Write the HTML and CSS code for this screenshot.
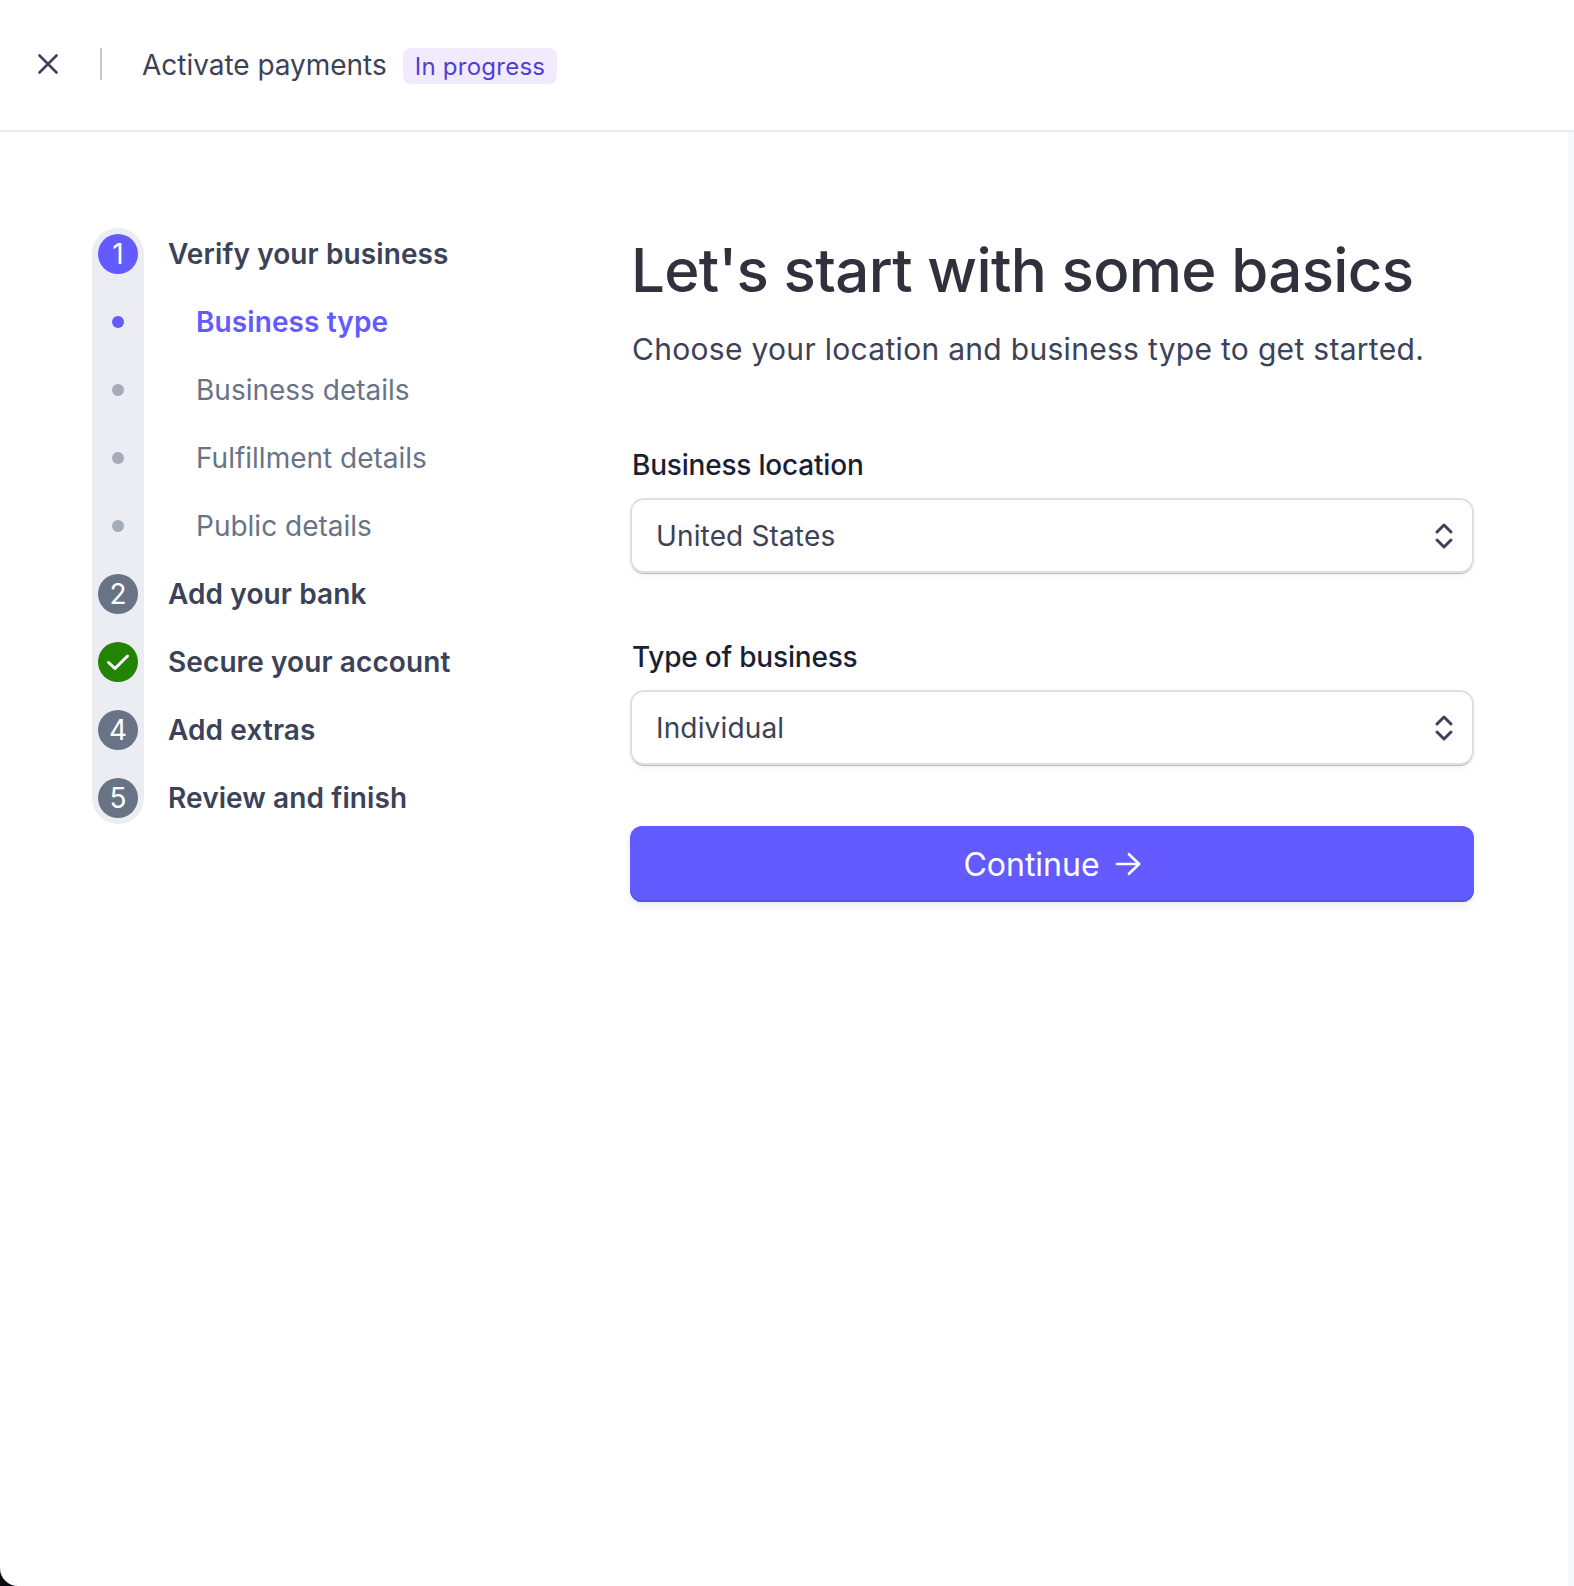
FILE: index.html
```html
<!DOCTYPE html>
<html lang="en">
<head>
<meta charset="UTF-8" />
<title>Activate payments</title>
<link rel="stylesheet" href="styles.css">
</head>
<body>
<div class="page">
  <header class="topbar">
    <button class="close-btn" aria-label="Close">
      <svg width="24" height="24" viewBox="0 0 24 24" fill="none" stroke="#3c4257" stroke-width="2.6" stroke-linecap="round"><path d="M3.5 3.5l17 17M20.5 3.5l-17 17"/></svg>
    </button>
    <span class="topbar-divider"></span>
    <span class="topbar-title">Activate payments</span>
    <span class="badge">In progress</span>
  </header>

  <div class="content">
    <nav class="steps">
      <ol class="step-list">
        <li class="step"><span class="marker current">1</span><span class="step-label">Verify your business</span></li>
        <li class="step sub active"><span class="dot-slot"><span class="dot"></span></span><span class="step-label">Business type</span></li>
        <li class="step sub"><span class="dot-slot"><span class="dot"></span></span><span class="step-label">Business details</span></li>
        <li class="step sub"><span class="dot-slot"><span class="dot"></span></span><span class="step-label">Fulfillment details</span></li>
        <li class="step sub"><span class="dot-slot"><span class="dot"></span></span><span class="step-label">Public details</span></li>
        <li class="step"><span class="marker">2</span><span class="step-label">Add your bank</span></li>
        <li class="step">
          <span class="marker done">
            <svg width="28" height="28" viewBox="0 0 28 28" fill="none" stroke="#fff" stroke-width="3" stroke-linecap="round" stroke-linejoin="round"><path d="M4.5 14.5l6.5 6L23.5 8"/></svg>
          </span>
          <span class="step-label">Secure your account</span>
        </li>
        <li class="step"><span class="marker">4</span><span class="step-label">Add extras</span></li>
        <li class="step"><span class="marker">5</span><span class="step-label">Review and finish</span></li>
      </ol>
    </nav>

    <main class="form-col">
      <h1>Let's start with some basics</h1>
      <p class="lead">Choose your location and business type to get started.</p>

      <div class="field">
        <label class="field-label">Business location</label>
        <div class="select">
          <span>United States</span>
          <svg width="20" height="28" viewBox="0 0 20 28" fill="none" stroke="#3c4257" stroke-width="3" stroke-linecap="round" stroke-linejoin="round"><path d="M3 10l7-7 7 7M3 18l7 7 7-7"/></svg>
        </div>
      </div>

      <div class="field">
        <label class="field-label">Type of business</label>
        <div class="select">
          <span>Individual</span>
          <svg width="20" height="28" viewBox="0 0 20 28" fill="none" stroke="#3c4257" stroke-width="3" stroke-linecap="round" stroke-linejoin="round"><path d="M3 10l7-7 7 7M3 18l7 7 7-7"/></svg>
        </div>
      </div>

      <button class="continue-btn">
        Continue
        <svg width="26" height="26" viewBox="0 0 28 28" fill="none" stroke="#fff" stroke-width="2.8" stroke-linecap="round" stroke-linejoin="round"><path d="M2 14h24M15 3.5l11 10.5-11 10.5"/></svg>
      </button>
    </main>
  </div>
</div>
</body>
</html>
```

FILE: styles.css
```css
/* Reset and base */
*, *::before, *::after {
  box-sizing: border-box;
}
html {
  background: #0b0b14;
}
body {
  margin: 0;
  font-family: Inter, "Liberation Sans", sans-serif;
  color: #3c4257;
}
.page {
  height: 1586px;
  background: #fff;
  border-bottom-left-radius: 18px;
  overflow: hidden;
  display: flex;
  flex-direction: column;
}
/* Top bar */
.topbar {
  height: 132px;
  flex-shrink: 0;
  display: flex;
  align-items: center;
  padding-left: 36px;
  border-bottom: 2px solid #ecedf2;
}
.close-btn {
  width: 24px;
  height: 24px;
  margin-bottom: 2px;
  padding: 0;
  border: none;
  background: none;
  display: flex;
}
.topbar-divider {
  width: 2px;
  height: 32px;
  margin-bottom: 2px;
  margin-left: 40px;
  background: #c1c9d2;
}
.topbar-title {
  margin-left: 40px;
  font-size: 28px;
  letter-spacing: -0.03px;
}
.badge {
  margin-left: 16px;
  margin-top: 2px;
  height: 36px;
  padding: 0 12px;
  display: flex;
  align-items: center;
  background: #f2ebff;
  border-radius: 8px;
  color: #4f3fd6;
  font-size: 24px;
  letter-spacing: 0.25px;
}
/* Content area */
.content {
  flex: 1;
  display: flex;
  border-right: 6px solid #f7f8fa;
}
/* Steps */
.steps {
  width: 632px;
  flex-shrink: 0;
  padding: 102px 0 0 98px;
}
.step-list {
  position: relative;
  margin: 0;
  padding: 0;
  list-style: none;
  display: flex;
  flex-direction: column;
  gap: 28px;
}
.step-list::before {
  content: "";
  position: absolute;
  top: -6px;
  bottom: -6px;
  left: -6px;
  width: 52px;
  background: #ecedf2;
  border-radius: 26px;
}
.step {
  position: relative;
  height: 40px;
  display: flex;
  align-items: center;
  gap: 30px;
  font-size: 28px;
  font-weight: 600;
  letter-spacing: 0.1px;
}
.marker {
  width: 40px;
  height: 40px;
  flex-shrink: 0;
  border-radius: 50%;
  background: #697386;
  color: #fff;
  display: flex;
  align-items: center;
  justify-content: center;
  font-weight: 400;
}
.marker.current {
  background: #635bff;
}
.marker.done {
  background: #228403;
}
.dot-slot {
  width: 40px;
  display: flex;
  justify-content: center;
  flex-shrink: 0;
}
.dot {
  width: 12px;
  height: 12px;
  border-radius: 50%;
  background: #a3acb9;
}
.step.sub {
  gap: 58px;
  font-weight: 400;
  letter-spacing: 0;
  color: #697386;
}
.step.active {
  font-weight: 600;
  letter-spacing: 0.1px;
  color: #635bff;
}
.step.active .dot {
  background: #635bff;
}
/* Form */
.form-col {
  width: 842px;
  padding-top: 102px;
}
h1 {
  margin: 0 0 0 -1px;
  font-size: 60px;
  line-height: 72px;
  font-weight: 500;
  letter-spacing: -0.66px;
  color: #30313d;
}
.lead {
  margin: 23px 0 0;
  font-size: 30px;
  line-height: 40px;
  letter-spacing: 0.3px;
}
.field {
  margin-top: 78px;
}
.field + .field {
  margin-top: 68px;
}
.field-label {
  display: block;
  font-size: 28px;
  line-height: 36px;
  font-weight: 450;
  letter-spacing: -0.2px;
  color: #1a1f36;
}
.select {
  margin-top: 17px;
  width: 840px;
  height: 71px;
  padding: 0 18px 0 24px;
  display: flex;
  align-items: center;
  justify-content: space-between;
  font-size: 28px;
  letter-spacing: 0.15px;
  background: #fff;
  border-radius: 12px;
  box-shadow: 0 0 0 2px #e0e0e0, 0 2px 0 1px #bdbdbd, 0 3px 6px rgb(0 0 0 / 0.1);
}
.continue-btn {
  margin: 63px 0 0 -2px;
  width: 844px;
  height: 76px;
  border: none;
  border-radius: 12px;
  background: #635bff;
  box-shadow: inset 0 -2px 0 #5a52e0, 0 3px 8px rgb(0 0 0 / 0.08);
  color: #fff;
  font-family: inherit;
  font-size: 32px;
  display: flex;
  align-items: center;
  justify-content: center;
  gap: 15px;
}
```
